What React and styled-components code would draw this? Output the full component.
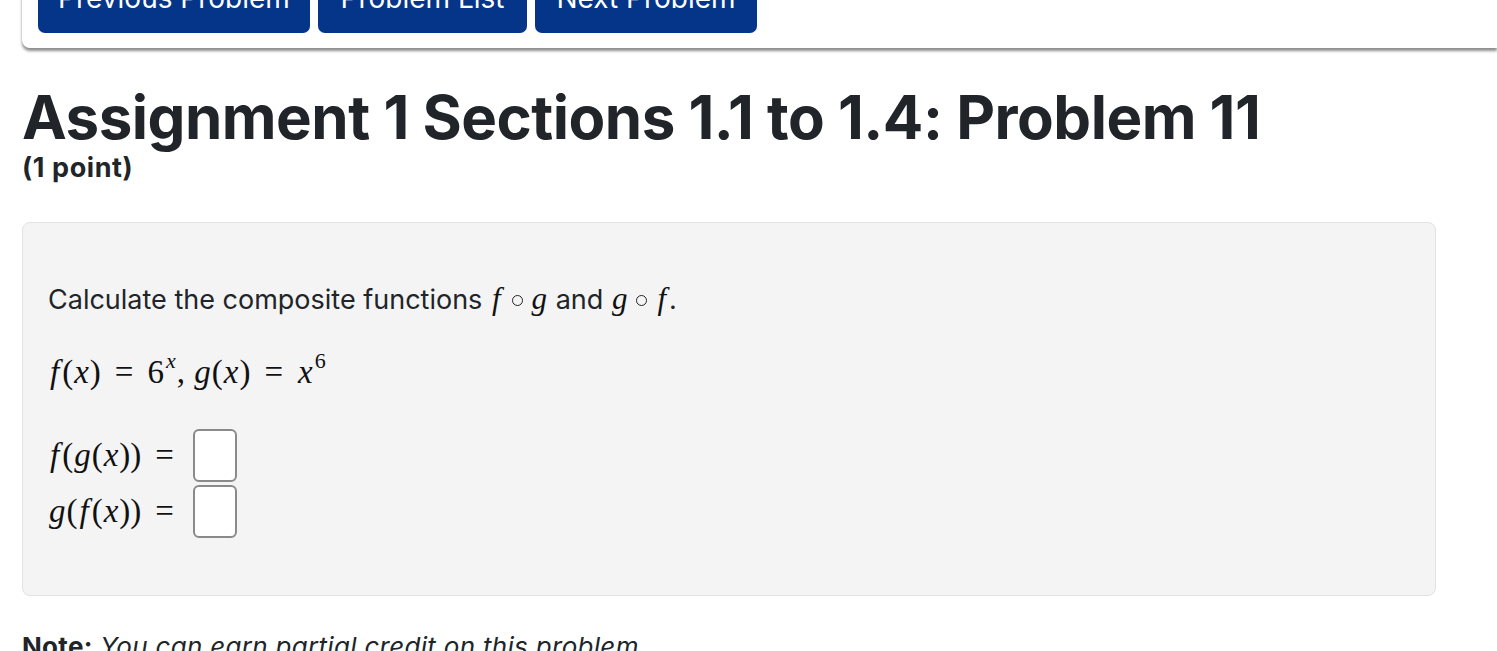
import styled, { createGlobalStyle } from 'styled-components'

const GlobalStyle = createGlobalStyle`
  html, body {
    margin: 0;
    padding: 0;
    background: #fff;
    overflow: hidden;
  }
  body {
    font-family: Inter, "Liberation Sans", sans-serif;
    color: #212529;
  }
`

const Page = styled.div`
  margin-top: -49px;
  width: 1497px;
`

const NavBar = styled.div`
  margin-left: 22px;
  background: #fff;
  border-bottom-left-radius: 8px;
  box-shadow: 0 3px 3px rgba(0, 0, 0, 0.45);
  padding: 16px 16px 15px;
  display: flex;
  gap: 8px;
`

const NavButton = styled.button`
  background: #043589;
  color: #fff;
  border: 0;
  border-radius: 7px;
  font-family: Inter, "Liberation Sans", sans-serif;
  font-size: 28px;
  line-height: 42px;
  padding: 10px 0 14px;
  width: ${(p) => p.$w}px;
`

const Main = styled.div`
  padding: 33px 22px 0;
`

const Title = styled.h1`
  margin: 0;
  font-size: 60px;
  font-weight: 700;
  line-height: 72px;
  letter-spacing: -0.5px;
`

const Points = styled.div`
  font-size: 27px;
  font-weight: 700;
  line-height: 32px;
  letter-spacing: 0.6px;
  margin-top: -1px;
`

const ProblemBox = styled.div`
  margin-top: 38px;
  width: 1414px;
  height: 374px;
  box-sizing: border-box;
  background: #f4f4f4;
  border: 1px solid #e2e2e2;
  border-radius: 8px;
  padding: 56px 25px 0;
`

const Para = styled.p`
  margin: 0 0 ${(p) => p.$mb || 0}px;
  font-size: 27px;
  line-height: 40px;
`

const MathText = styled.span`
  font-family: "Liberation Serif", "DejaVu Serif", serif;
  font-size: ${(p) => p.$size || 33}px;
  color: #111;
`

const V = styled.i`
  font-family: "Liberation Serif", serif;
  font-style: italic;
  padding: ${(p) => (p.$f ? '0 3px 0 2px' : '0 1px')};
`

const Op = styled.span`
  padding: 0 ${(p) => p.$r || 14}px 0 ${(p) => p.$l || 14}px;
`

const Ring = styled.span`
  display: inline-block;
  width: 9px;
  height: 9px;
  border: 1.5px solid #222;
  border-radius: 50%;
  margin: 0 8px;
  vertical-align: 3px;
`

const Sup = styled.sup`
  font-size: 22px;
  vertical-align: 0;
  position: relative;
  top: -15px;
  margin-left: 1px;
`

const AnswerRow = styled.div`
  display: flex;
  align-items: center;
  height: 56px;
`

const Label = styled.div`
  width: 145px;
  display: flex;
  align-items: center;
`

const AnswerInput = styled.input`
  width: 44px;
  height: 53px;
  box-sizing: border-box;
  background: #fff;
  border: 2px solid #8a8a8a;
  border-radius: 6px;
  margin: 0;
  padding: 0;
`

const Note = styled.p`
  margin: 31px 0 0;
  font-size: 26px;
  line-height: 40px;
  letter-spacing: 0.3px;

  b {
    font-weight: 700;
  }
  em {
    font-style: italic;
  }
`

const Comp = ({ a, b }) => (
  <MathText $size={31}>
    <V $f={a === 'f'}>{a}</V>
    <Ring />
    <V $f={b === 'f'}>{b}</V>
  </MathText>
)

const App = () => {
  return (
    <>
      <GlobalStyle />
      <Page>
        <NavBar>
          <NavButton $w={272}>Previous Problem</NavButton>
          <NavButton $w={209}>Problem List</NavButton>
          <NavButton $w={222}>Next Problem</NavButton>
        </NavBar>
        <Main>
          <Title>Assignment 1 Sections 1.1 to 1.4: Problem 11</Title>
          <Points>(1 point)</Points>
          <ProblemBox>
            <Para $mb={32}>
              Calculate the composite functions <Comp a="f" b="g" /> and <Comp a="g" b="f" />.
            </Para>
            <Para $mb={31}>
              <MathText>
                <V $f>f</V>(<V>x</V>)<Op>=</Op>6<Sup><V>x</V></Sup>,&nbsp;<V>g</V>(<V>x</V>)<Op>=</Op>
                <V>x</V>
                <Sup>6</Sup>
              </MathText>
            </Para>
            <AnswerRow>
              <Label>
                <MathText>
                  <V $f>f</V>(<V>g</V>(<V>x</V>))<Op $l={14} $r={6}>=</Op>
                </MathText>
              </Label>
              <AnswerInput aria-label="f(g(x))" />
            </AnswerRow>
            <AnswerRow>
              <Label>
                <MathText>
                  <V>g</V>(<V $f>f</V>(<V>x</V>))<Op $l={14} $r={6}>=</Op>
                </MathText>
              </Label>
              <AnswerInput aria-label="g(f(x))" />
            </AnswerRow>
          </ProblemBox>
          <Note>
            <b>Note:</b> <em>You can earn partial credit on this problem.</em>
          </Note>
        </Main>
      </Page>
    </>
  )
}

export default App
